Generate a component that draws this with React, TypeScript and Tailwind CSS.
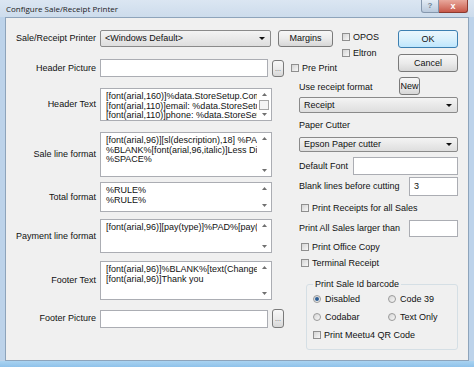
import React from "react";

function Arrow({ dir }: { dir: "up" | "down" }) {
  return (
    <svg width="5" height="3" viewBox="0 0 5 3">
      {dir === "up" ? (
        <path d="M0 3 L2.5 0 L5 3Z" fill="#707070" />
      ) : (
        <path d="M0 0 L2.5 3 L5 0Z" fill="#707070" />
      )}
    </svg>
  );
}

function Memo({ lines, hClass, thumb }: { lines: string[]; hClass: string; thumb?: boolean }) {
  return (
    <div className={`flex w-[172px] ${hClass} border border-[#abadb3] bg-white`}>
      <div className="flex-1 overflow-hidden whitespace-nowrap pl-[5px] pt-[3px] leading-[9.5px]">
        {lines.map((l, i) => (
          <div key={i}>{l}</div>
        ))}
      </div>
      <div className="w-[14px] flex flex-col items-center justify-between py-[4px]">
        <Arrow dir="up" />
        {thumb && <div className="w-[10px] h-[10px] border border-[#a6a6a6] bg-[#f4f4f4]" />}
        <Arrow dir="down" />
      </div>
    </div>
  );
}

function Combo({ text, cls }: { text: string; cls: string }) {
  return (
    <div
      className={`${cls} flex items-center border border-[#8a8a8a] rounded-[2px] bg-linear-to-b from-[#f4f4f4] to-[#dedede] pl-[4px] pr-[5px] leading-none`}
    >
      <span className="flex-1 whitespace-nowrap">{text}</span>
      <svg width="6" height="3" viewBox="0 0 6 3">
        <path d="M0 0h6L3 3z" fill="#111" />
      </svg>
    </div>
  );
}

function Btn({ children, cls }: { children?: React.ReactNode; cls: string }) {
  return (
    <div
      className={`${cls} flex items-center justify-center border border-[#7a7a7a] rounded-[3px] bg-linear-to-b from-[#f7f7f7] via-[#ebebeb] to-[#d7d7d7] leading-none`}
    >
      {children}
    </div>
  );
}

function Check({ label, cls }: { label: string; cls: string }) {
  return (
    <div className={`${cls} flex items-center gap-[3px] h-[10px] leading-[10px]`}>
      <span className="w-[8px] h-[8px] border border-[#8f8f8f] bg-linear-to-br from-[#d4d4d4] to-[#f7f7f7]" />
      <span className="whitespace-nowrap">{label}</span>
    </div>
  );
}

function Radio({ label, on, cls }: { label: string; on?: boolean; cls: string }) {
  return (
    <div className={`${cls} flex items-center gap-[4px] h-[10px] leading-[10px]`}>
      <span className="w-[8px] h-[8px] rounded-full border border-[#9a9a9a] bg-linear-to-br from-[#d6d6d6] to-[#f7f7f7] flex items-center justify-center">
        {on && <span className="w-[4px] h-[4px] rounded-full bg-[#2f5f95]" />}
      </span>
      <span className="whitespace-nowrap">{label}</span>
    </div>
  );
}

function Input({ cls, text }: { cls: string; text?: string }) {
  return (
    <div className={`${cls} border border-[#abadb3] bg-white pl-[4px] flex items-center leading-none`}>{text}</div>
  );
}

function Row({ label, children, cls }: { label: string; children: React.ReactNode; cls: string }) {
  return (
    <div className={`${cls} flex items-center`}>
      <div className="w-[90px] text-right whitespace-nowrap leading-[11px]">{label}</div>
      <div className="ml-[4px] flex items-center">{children}</div>
    </div>
  );
}

export default function App() {
  return (
    <div className="w-[474px] h-[367px] overflow-hidden flex flex-col bg-[#bdd3ea] font-['Liberation_Sans',Arial,sans-serif] text-[9px] text-[#111]">
      {/* title bar */}
      <div className="h-[17px] shrink-0 flex bg-linear-to-b from-[#dbe6f2] to-[#cddcec]">
        <div className="pl-[6px] pt-[4px] text-[8px] leading-[10px] font-['Open_Sans',sans-serif] text-[#1b1b1b]">
          Configure Sale/Receipt Printer
        </div>
        <div className="ml-auto mr-[6px] flex h-[13px]">
          <div className="w-[18px] h-[13px] flex items-center justify-center rounded-bl-[3px] border border-[#8597ad] border-t-0 bg-linear-to-b from-[#e4ecf5] to-[#b9c9dc] text-[8px] leading-none text-[#6f7f92] font-bold">
            ?
          </div>
          <div className="w-[29px] h-[13px] flex items-center justify-center rounded-br-[3px] border border-[#8c3a30] border-t-0 border-l-0 bg-linear-to-b from-[#e8a89c] to-[#c7584a] text-[9px] leading-none text-white font-bold">
            x
          </div>
        </div>
      </div>

      {/* client area */}
      <div className="mx-[5px] h-[344px] shrink-0 border border-[#8ea4bb] bg-[#f0f0f0] flex pt-[12px]">
        {/* left column */}
        <div className="w-[278px] shrink-0 flex flex-col">
          <Row label="Sale/Receipt Printer" cls="h-[17px]">
            <Combo text="<Windows Default>" cls="w-[171px] h-[17px]" />
          </Row>
          <Row label="Header Picture" cls="mt-[12px] h-[18px]">
            <Input cls="w-[168px] h-[18px]" />
            <Btn cls="ml-[4px] w-[12px] h-[17px] text-[#555]">
              <span className="text-[7px] leading-none">...</span>
            </Btn>
          </Row>
          <Row label="Header Text" cls="mt-[11px] h-[33px]">
            <Memo
              hClass="h-[33px]"
              thumb
              lines={[
                "[font(arial,160)]%data.StoreSetup.CompanyName%",
                "[font(arial,110)]email: %data.StoreSetup.Email%",
                "[font(arial,110)]phone: %data.StoreSetup.Phone%",
              ]}
            />
          </Row>
          <Row label="Sale line format" cls="mt-[11px] h-[45px]">
            <Memo
              hClass="h-[45px]"
              lines={[
                "[font(arial,96)][sl(description),18] %PAD%[sl(amount)]",
                "%BLANK%[font(arial,96,italic)]Less Discount",
                "%SPACE%",
              ]}
            />
          </Row>
          <Row label="Total format" cls="mt-[5px] h-[30px]">
            <Memo hClass="h-[30px]" lines={["%RULE%", "%RULE%"]} />
          </Row>
          <Row label="Payment line format" cls="mt-[7px] h-[34px]">
            <Memo hClass="h-[34px]" lines={["[font(arial,96)][pay(type)]%PAD%[pay(amount)]"]} />
          </Row>
          <Row label="Footer Text" cls="mt-[8px] h-[39px]">
            <Memo
              hClass="h-[39px]"
              lines={["[font(arial,96)]%BLANK%[text(Change)]", "[font(arial,96)]Thank you"]}
            />
          </Row>
          <Row label="Footer Picture" cls="mt-[9px] h-[19px]">
            <Input cls="w-[168px] h-[18px]" />
            <Btn cls="ml-[4px] w-[12px] h-[19px] text-[#555]">
              <span className="text-[7px] leading-none">...</span>
            </Btn>
          </Row>
        </div>

        {/* right column */}
        <div className="w-[174px] shrink-0 flex flex-col">
          <div className="flex">
            <div className="w-[114px] flex flex-col">
              <div className="flex items-start">
                <Btn cls="-ml-[6px] w-[55px] h-[17px]">Margins</Btn>
                <div className="ml-[9px] pt-[2px] flex flex-col">
                  <Check label="OPOS" cls="" />
                  <Check label="Eltron" cls="mt-[6px]" />
                </div>
              </div>
              <Check label="Pre Print" cls="ml-[7px] mt-[5px]" />
              <div className="ml-[15px] mt-[9px] h-[10px] leading-[10px] whitespace-nowrap">Use receipt format</div>
            </div>
            <div className="w-[60px] flex flex-col">
              <Btn cls="w-[60px] h-[18px] !border-[#3c7fb1] !from-[#eaf6fd] !via-[#d9f0fc] !to-[#bee6fd]">OK</Btn>
              <Btn cls="mt-[6px] w-[60px] h-[18px]">Cancel</Btn>
              <Btn cls="mt-[5px] ml-[1px] w-[21px] h-[18px]">New</Btn>
            </div>
          </div>
          <Combo text="Receipt" cls="ml-[15px] mt-[2px] w-[159px] h-[16px]" />
          <div className="ml-[15px] mt-[6px] h-[12px] leading-[12px]">Paper Cutter</div>
          <Combo text="Epson Paper cutter" cls="ml-[15px] mt-[6px] w-[159px] h-[15px]" />
          <div className="ml-[15px] mt-[5px] h-[18px] flex items-center leading-[11px]">
            <span className="whitespace-nowrap">Default Font</span>
            <Input cls="ml-auto w-[105px] h-[18px]" />
          </div>
          <div className="ml-[15px] mt-[2px] h-[19px] flex items-center leading-[11px]">
            <span className="whitespace-nowrap">Blank lines before cutting</span>
            <Input cls="ml-auto w-[49px] h-[19px]" text="3" />
          </div>
          <Check label="Print Receipts for all Sales" cls="ml-[17px] mt-[7px]" />
          <div className="ml-[15px] mt-[7px] h-[17px] flex items-center leading-[11px]">
            <span className="whitespace-nowrap">Print All Sales larger than</span>
            <Input cls="ml-auto w-[49px] h-[17px]" />
          </div>
          <Check label="Print Office Copy" cls="ml-[17px] mt-[5px]" />
          <Check label="Terminal Receipt" cls="ml-[17px] mt-[6px]" />
          <fieldset className="ml-[22px] mt-[11px] w-[152px] h-[71px] border border-[#d5dfe5] rounded-[3px] flex flex-col">
            <legend className="ml-[6px] px-[2px] h-[10px] leading-[10px]">Print Sale Id barcode</legend>
            <div className="mt-[5px] flex pl-[6px]">
              <Radio label="Disabled" on cls="w-[75px]" />
              <Radio label="Code 39" cls="" />
            </div>
            <div className="mt-[8px] flex pl-[6px]">
              <Radio label="Codabar" cls="w-[75px]" />
              <Radio label="Text Only" cls="" />
            </div>
            <Check label="Print Meetu4 QR Code" cls="mt-[8px] ml-[6px]" />
          </fieldset>
        </div>
      </div>

      {/* bottom frame */}
      <div className="flex-1 bg-linear-to-b from-[#a9d3f1] to-[#8fc2ea]" />
    </div>
  );
}
